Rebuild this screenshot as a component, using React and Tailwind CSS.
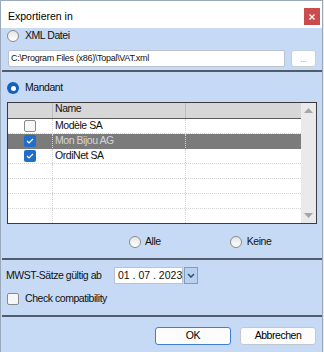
import React from "react";

function Radio({ checked }) {
  if (checked) {
    return (
      <span className="w-[12px] h-[12px] rounded-full bg-[#1560bd] flex items-center justify-center shrink-0">
        <span className="w-[5px] h-[5px] rounded-full bg-white" />
      </span>
    );
  }
  return (
    <span className="w-[12px] h-[12px] rounded-full border border-[#8a8a8a] bg-gradient-to-b from-[#e6e6e6] to-white shrink-0" />
  );
}

function Check({ checked }) {
  if (checked) {
    return (
      <span className="w-[12px] h-[12px] rounded-[2px] bg-[#1f6fc8] flex items-center justify-center">
        <svg width="8" height="6" viewBox="0 0 8 6">
          <path d="M1 3 L3 5 L7 1" stroke="white" strokeWidth="1.2" fill="none" />
        </svg>
      </span>
    );
  }
  return <span className="w-[12px] h-[12px] rounded-[2px] border border-[#8a8a8a] bg-[#f7f7f7]" />;
}

const rows = [
  { name: "Modèle SA", checked: false, sel: false },
  { name: "Mon Bijou AG", checked: true, sel: true },
  { name: "OrdiNet SA", checked: true, sel: false },
  null,
  null,
  null,
  null,
];

export default function App() {
  return (
    <div className="w-[324px] h-[352px] bg-[#eaeaea] font-['Liberation_Sans',Arial,sans-serif] text-[10.5px] tracking-[-0.45px] text-[#111] overflow-hidden whitespace-nowrap">
      <div className="w-[323px] h-[352px] border-l border-t border-r border-[#9aa8bc] flex flex-col">
        {/* title bar */}
        <div className="h-[27px] bg-white flex items-start justify-between shrink-0">
          <span className="pl-[7px] pt-[8px] text-[10.5px] tracking-normal text-black">Exportieren in</span>
          <span className="mt-[7px] mr-[2px] w-[16px] h-[17px] bg-[#c94d4f] flex items-center justify-center">
            <svg width="6" height="6" viewBox="0 0 6 6">
              <path d="M0.5 0.5 L5.5 5.5 M5.5 0.5 L0.5 5.5" stroke="white" strokeWidth="1.3" />
            </svg>
          </span>
        </div>
        {/* body */}
        <div className="flex-1 bg-[#c6daf6] flex flex-col">
          <div className="mt-[2px] pl-[6px] flex items-center gap-[6px] h-[12px]">
            <Radio />
            <span>XML Datei</span>
          </div>
          <div className="mt-[8px] pl-[7px] pr-[6px] flex items-center">
            <div className="w-[277px] h-[17px] bg-white border border-[#b9c2cf] rounded-[2px] flex items-center pl-[2px] text-[9px] tracking-[-0.3px]">
              C:\Program Files (x86)\Topal\VAT.xml
            </div>
            <div className="ml-[6px] w-[25px] h-[17px] bg-white border border-[#c9cfd8] rounded-[3px] flex items-end justify-center pb-[2px] text-[#7a6f9c] text-[8px] tracking-normal leading-none">
              ...
            </div>
          </div>
          <div className="mt-[3px] h-[2px] bg-[#525b69] ml-[1px]" />
          <div className="mt-[9px] pl-[6px] flex items-center gap-[6px] h-[14px]">
            <Radio checked />
            <span>Mandant</span>
          </div>
          {/* table */}
          <div className="mt-[7px] ml-[6px] w-[310px] h-[122px] border border-[#3c3c3c] bg-white flex shrink-0">
            <div className="flex-1 flex flex-col overflow-hidden">
              <div className="h-[16px] bg-[#d7d7d7] border-b border-[#5a5a5a] flex shrink-0">
                <div className="w-[45px] border-r border-[#bdbdbd]" />
                <div className="w-[133px] border-r border-[#bdbdbd] pl-[2px] flex items-end pb-[1px]">Name</div>
                <div className="flex-1" />
              </div>
              {rows.map((r, i) => (
                <div
                  key={i}
                  className={
                    "h-[15px] flex shrink-0 border-b border-dotted " +
                    (r && r.sel ? "bg-[#7b7b7b] text-[#d6d6d6] border-[#7b7b7b]" : "border-[#d4d4d4]")
                  }
                >
                  <div className="w-[45px] border-r border-dotted border-[#d4d4d4] flex items-center justify-center">
                    {r && <Check checked={r.checked} />}
                  </div>
                  <div className="w-[133px] border-r border-dotted border-[#d4d4d4] pl-[2px] flex items-center">
                    {r ? r.name : ""}
                  </div>
                  <div className="flex-1" />
                </div>
              ))}
            </div>
            <div className="w-[15px] bg-[#eaeaea] flex flex-col items-center justify-between py-[5px]">
              <svg width="9" height="5" viewBox="0 0 9 5">
                <path d="M0 5 L4.5 0 L9 5 Z" fill="#a6a6a6" />
              </svg>
              <svg width="9" height="5" viewBox="0 0 9 5">
                <path d="M0 0 L4.5 5 L9 0 Z" fill="#a6a6a6" />
              </svg>
            </div>
          </div>
          <div className="mt-[11px] h-[14px] flex items-center">
            <div className="ml-[128px] flex items-center gap-[4px]">
              <Radio />
              <span>Alle</span>
            </div>
            <div className="ml-[69px] flex items-center gap-[5px]">
              <Radio />
              <span>Keine</span>
            </div>
          </div>
          <div className="mt-[9px] h-[2px] bg-[#525b69] ml-[1px]" />
          <div className="mt-[7px] flex items-center pl-[5px]">
            <span className="w-[108px]">MWST-Sätze gültig ab</span>
            <div className="w-[69px] h-[17px] bg-white border border-[#b9c2cf] flex items-center pl-[3px] tracking-normal text-[10.5px]">
              01 . 07 . 2023
            </div>
            <div className="ml-[1px] w-[14px] h-[17px] bg-[#b8d1ee] border border-[#7f9dc2] flex items-center justify-center">
              <svg width="8" height="5" viewBox="0 0 8 5">
                <path d="M1 1 L4 4 L7 1" stroke="#2c4a78" strokeWidth="1.5" fill="none" />
              </svg>
            </div>
          </div>
          <div className="mt-[8px] pl-[6px] h-[13px] flex items-center gap-[6px]">
            <Check />
            <span>Check compatibility</span>
          </div>
          <div className="mt-[10px] h-[2px] bg-[#525b69] ml-[1px]" />
          <div className="mt-[10px] flex justify-end gap-[9px] pr-[6px]">
            <div className="w-[76px] h-[18px] bg-[#fcfcfd] border border-[#3f7fd0] rounded-[3px] flex items-center justify-center text-black">
              OK
            </div>
            <div className="w-[76px] h-[18px] bg-[#fcfcfd] border border-[#c4c8ce] rounded-[3px] flex items-center justify-center text-black">
              Abbrechen
            </div>
          </div>
        </div>
      </div>
    </div>
  );
}
